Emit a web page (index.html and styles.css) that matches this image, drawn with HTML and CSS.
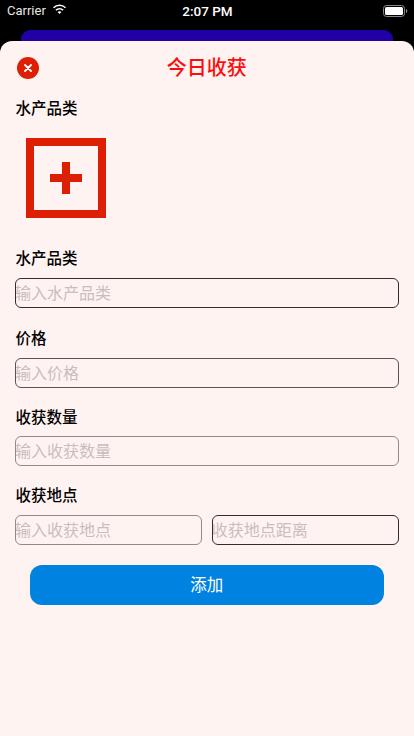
FILE: index.html
```html
<!DOCTYPE html>
<html lang="zh">
<head>
<meta charset="utf-8">
<title>今日收获</title>
<link rel="stylesheet" href="styles.css">
</head>
<body>
<div class="status">
  <div class="status-left">
    <span class="carrier">Carrier</span>
    <svg class="wifi" viewBox="0 0 16 12" width="15" height="11"><path fill="#fff" d="M8 2.300c2.200 0 4.300.9 5.900 2.400l1.200-1.200A10.300 10.300 0 0 0 8 .6 10.300 10.300 0 0 0 .9 3.500l1.200 1.200A8.600 8.600 0 0 1 8 2.300zM8 6c1.200 0 2.400.5 3.300 1.300l1.200-1.200A6.600 6.600 0 0 0 8 4.300a6.600 6.600 0 0 0-4.500 1.800l1.200 1.200A4.900 4.900 0 0 1 8 6zM8 8a3 3 0 0 0-2.100.8L8 11l2.100-2.200A3 3 0 0 0 8 8z"/></svg>
  </div>
  <span class="time">2:07 PM</span>
  <div class="status-right">
    <svg viewBox="0 0 25 12" width="25" height="12"><rect x=".5" y=".5" width="21" height="11" rx="3" fill="none" stroke="#8a8a8a"/><rect x="2" y="2" width="18" height="8" rx="1.500" fill="#fff"/><path d="M23 4v4c.8-.3 1.300-1.100 1.300-2S23.800 4.300 23 4z" fill="#8a8a8a"/></svg>
  </div>
</div>
<div class="backdrop"></div>
<main class="sheet">
  <header class="sheet-head">
    <span class="close">
      <svg viewBox="0 0 22 22" width="22" height="22"><circle cx="11" cy="11" r="11" fill="#dc1f05"/><path d="M8 8l6 6M14 8l-6 6" stroke="#fff" stroke-width="1.800" stroke-linecap="round"/></svg>
    </span>
    <h1 class="title">今日收获</h1>
  </header>
  <div class="label label-first">水产品类</div>
  <div class="upload">
    <svg viewBox="0 0 80 80" width="80" height="80"><rect x="4" y="4" width="72" height="72" fill="none" stroke="#dc1f05" stroke-width="8"/><path d="M36 24h8v12h12v8H44v12h-8V44H24v-8h12z" fill="#dc1f05"/></svg>
  </div>
  <label class="label">水产品类</label>
  <input class="field f-dark" placeholder="输入水产品类">
  <label class="label l2">价格</label>
  <input class="field f-mid" placeholder="输入价格">
  <label class="label l3">收获数量</label>
  <input class="field f-light" placeholder="输入收获数量">
  <label class="label l3 l4">收获地点</label>
  <div class="pair">
    <input class="field f-light" placeholder="输入收获地点">
    <input class="field f-dark" placeholder="收获地点距离">
  </div>
  <button class="add">添加</button>
</main>
</body>
</html>
```
FILE: styles.css
```css
* { box-sizing: border-box; }
html, body { margin: 0; height: 100%; }
body {
  width: 414px;
  height: 736px;
  overflow: hidden;
  background: #000;
  display: flex;
  flex-direction: column;
  font-family: "Noto Sans CJK SC", "Noto Sans", sans-serif;
}
.status {
  height: 30px;
  flex: none;
  display: grid;
  grid-template-columns: 1fr auto 1fr;
  align-items: center;
  padding: 0 6px 9px 7px;
  color: #fff;
  font-family: Roboto, "Liberation Sans", sans-serif;
  font-size: 13.500px;
}
.status-left { display: flex; align-items: center; gap: 6px; color: #e6e6e6; }
.carrier { font-size: 13px; }
.wifi { margin-top: -2px; }
.time { font-weight: 500; }
.status-right { display: flex; justify-content: flex-end; }
.backdrop {
  flex: none;
  height: 11px;
  margin: 0 21px;
  background: #2100a4;
  border-radius: 9px 9px 0 0;
}
.sheet {
  flex: 1;
  display: flex;
  flex-direction: column;
  padding: 0 15.500px 0 15px;
  background: #fff3f2;
  border-radius: 12px 12px 0 0;
}
.sheet-head {
  height: 52px;
  flex: none;
  position: relative;
  display: flex;
  align-items: center;
  justify-content: center;
}
.close { position: absolute; left: 2px; top: 15.500px; width: 22px; height: 22px; }
.close svg { display: block; }
.title {
  margin: 0;
  color: #fb0d0d;
  font-size: 20px;
  line-height: 28px;
  font-weight: 500;
}
.label {
  display: block;
  flex: none;
  margin: 0 0 11px .5px;
  height: 20px;
  line-height: 20px;
  font-size: 15.500px;
  font-weight: 500;
  color: #000;
}
.label-first { margin-top: 4px; margin-bottom: 0; }
.upload { flex: none; margin: 21px 0 29px 10.750px; height: 80px; }
.upload svg { display: block; }
.l2 { margin-top: 19px; }
.l3 { margin-top: 18px; margin-bottom: 10px; }
.l4 { margin-bottom: 11px; }
.field {
  display: block;
  width: 100%;
  min-width: 0;
  height: 30px;
  flex: none;
  padding: 0 0 3px;
  text-indent: -1px;
  background: transparent;
  border: 1px solid #333;
  border-radius: 6px;
  outline: none;
  font: inherit;
  font-size: 16px;
}
.field::placeholder { color: #c7bebe; opacity: 1; }
.f-dark { border-color: #2e2e2e; }
.f-mid { border-color: #555; }
.f-light { border-color: #8f8b8b; }
.pair { display: flex; gap: 10px; flex: none; }
.pair .field { flex: 1; }
.add {
  flex: none;
  align-self: center;
  width: 354px;
  height: 40px;
  margin-top: 20px;
  padding: 0 0 2px;
  border: 0;
  border-radius: 12px;
  background: #0083e0;
  color: #fff;
  font: inherit;
  font-size: 16.500px;
}
```
